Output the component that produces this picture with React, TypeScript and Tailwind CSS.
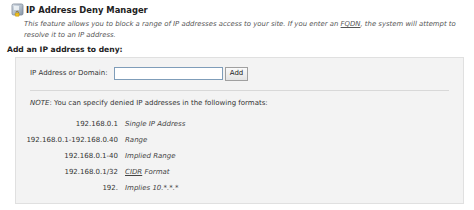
import React from "react";

function Icon() {
  return (
    <svg width="14" height="14" viewBox="0 0 14 14" className="shrink-0">
      <defs>
        <linearGradient id="g1" x1="0" y1="0" x2="1" y2="1">
          <stop offset="0" stopColor="#dfe6ee" />
          <stop offset="1" stopColor="#8796a8" />
        </linearGradient>
      </defs>
      <rect x="1" y="1" width="11" height="11" rx="1.5" fill="url(#g1)" stroke="#7b8796" strokeWidth="0.8" />
      <rect x="3" y="3" width="5" height="4" fill="#f4f7fa" opacity="0.8" />
      <path d="M5 9.5 a1.2 1.2 0 0 1 2.4 0 v0.8" fill="none" stroke="#8a6a10" strokeWidth="0.8" />
      <rect x="4.3" y="10" width="3.8" height="3.2" rx="0.4" fill="#f2c21b" stroke="#b48a0c" strokeWidth="0.5" />
    </svg>
  );
}

const rows: [string, React.ReactNode][] = [
  ["192.168.0.1", "Single IP Address"],
  ["192.168.0.1-192.168.0.40", "Range"],
  ["192.168.0.1-40", "Implied Range"],
  [
    "192.168.0.1/32",
    <>
      <span className="underline">CIDR</span> Format
    </>,
  ],
  ["192.", "Implies 10.*.*.*"],
];

export default function App() {
  return (
    <div
      className="w-[474px] h-[210px] bg-white text-[#333] overflow-hidden"
      style={{ fontFamily: '"DejaVu Sans", Verdana, sans-serif' }}
    >
      <div className="flex items-center gap-[1px] pl-[11px] pt-[3px] h-[17px]">
        <Icon />
        <span className="text-[8.4px] font-bold text-[#222] leading-none">IP Address Deny Manager</span>
      </div>
      <p className="pl-[24px] pr-[12px] pt-[2px] text-[6.9px] italic text-[#555] leading-[11px]">
        This feature allows you to block a range of IP addresses access to your site. If you enter an{" "}
        <span className="underline">FQDN</span>, the system will attempt to resolve it to an IP address.
      </p>
      <div className="pl-[7px] pt-[3px] text-[7.6px] font-bold text-[#222] leading-[12px]">
        Add an IP address to deny:
      </div>
      <div className="ml-[15px] mt-[1px] w-[449px] h-[147px] bg-[#f3f3f3] border border-[#e0e0e0]">
        <div className="flex items-center pl-[14px] pt-[8px] h-[23px]">
          <span className="text-[7px] leading-none w-[84px]">IP Address or Domain:</span>
          <input
            className="w-[109px] h-[13px] bg-white border border-[#7f9db9] outline-none"
            defaultValue=""
          />
          <button className="ml-[2px] w-[23px] h-[14px] text-[7px] leading-none border border-[#a0a0a0] bg-gradient-to-b from-[#fafafa] to-[#e4e4e4] text-[#222]">
            Add
          </button>
        </div>
        <div className="mx-[14px] mt-[9px] border-t border-[#d8d8d8]" />
        <div className="pl-[14px] pt-[7px] text-[7px] leading-[10px]">
          <i>NOTE</i>: You can specify denied IP addresses in the following formats:
        </div>
        <div className="grid grid-cols-[93px_1fr] gap-x-[7px] pl-[9px] pt-[8px] text-[7px] leading-[16px]">
          {rows.map(([ip, desc], i) => (
            <React.Fragment key={i}>
              <span className="text-right whitespace-nowrap">{ip}</span>
              <span className="italic text-[#444]">{desc}</span>
            </React.Fragment>
          ))}
        </div>
      </div>
    </div>
  );
}
